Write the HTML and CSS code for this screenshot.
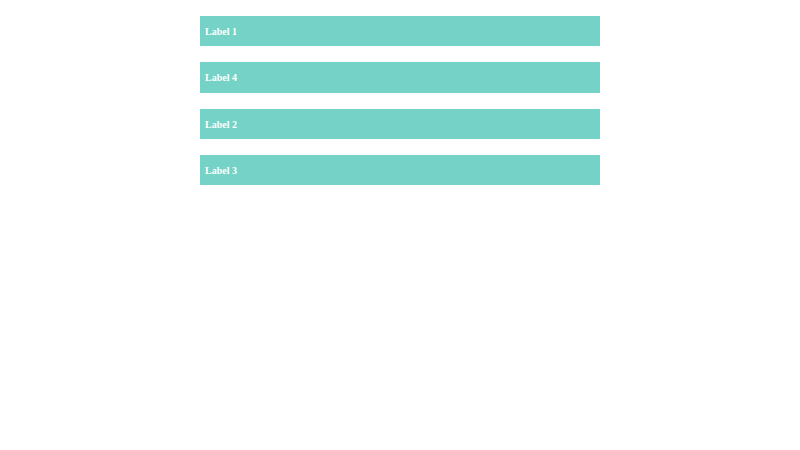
FILE: index.html
```html
<!DOCTYPE html>
<html>
<head>
<meta charset="utf-8">
<link rel="stylesheet" href="styles.css">
</head>
<body>
<div class="list">
  <div class="item">Label 1</div>
  <div class="item">Label 4</div>
  <div class="item">Label 2</div>
  <div class="item">Label 3</div>
</div>
</body>
</html>
```
FILE: styles.css
```css
body {
  margin: 8px;
  background: #ffffff;
  font-family: "Liberation Serif", "Times New Roman", serif;
}
.list {
  width: 400px;
  margin: 0 auto;
  padding-top: 8px;
  display: flex;
  flex-direction: column;
  gap: 16px;
}
.item {
  height: 30.33px;
  line-height: 31px;
  padding-left: 5px;
  background: #74d3c6;
  color: #ffffff;
  font-weight: bold;
  font-size: 10px;
}
```
